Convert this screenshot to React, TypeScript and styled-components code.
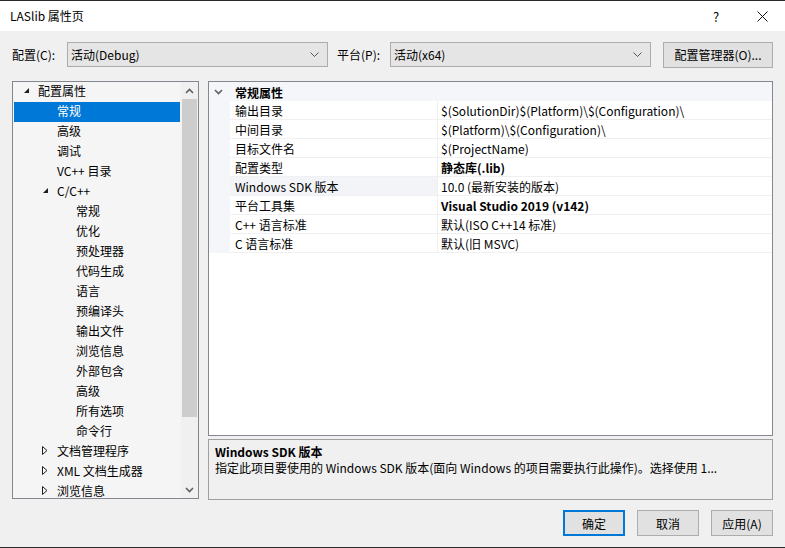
import React from "react";
import styled, { createGlobalStyle } from "styled-components";

const GlobalStyle = createGlobalStyle`
  html, body {
    margin: 0;
    padding: 0;
    background: #f0f0f0;
  }
  * {
    box-sizing: border-box;
  }
`;

const FONT = `"Noto Sans CJK SC", "Noto Sans", sans-serif`;

const Window = styled.div`
  width: 785px;
  height: 548px;
  background: #f0f0f0;
  border-top: 1px solid #2b2b2b;
  border-bottom: 1px solid #2b2b2b;
  font-family: ${FONT};
  font-size: 12px;
  color: #000;
  display: flex;
  flex-direction: column;
  overflow: hidden;
`;

const TitleBar = styled.div`
  height: 30px;
  background: #fff;
  display: flex;
  align-items: center;
  padding-left: 10px;
`;

const Title = styled.div`
  flex: 1;
  line-height: 16px;
`;

const CaptionButton = styled.div`
  width: 46px;
  height: 30px;
  display: flex;
  align-items: center;
  justify-content: center;
  font-size: 13px;
`;

const Toolbar = styled.div`
  display: flex;
  align-items: center;
  padding: 11px 12px 0;
  height: 36px;
`;

const Label = styled.div<{ $w: number; $pl?: number }>`
  width: ${(p) => p.$w}px;
  padding-left: ${(p) => p.$pl ?? 0}px;
  line-height: 25px;
`;

const Combo = styled.div`
  width: 261px;
  height: 25px;
  background: #e5e5e5;
  border: 1px solid #acacac;
  display: flex;
  align-items: center;
  padding: 0 8px 0 3px;
`;

const ComboText = styled.div`
  flex: 1;
`;

const Spacer = styled.div`
  width: 12px;
`;

const Button = styled.div<{ $w: number; $default?: boolean }>`
  width: ${(p) => p.$w}px;
  height: 26px;
  background: #e1e1e1;
  border: ${(p) => (p.$default ? "2px solid #0078d7" : "1px solid #adadad")};
  display: flex;
  align-items: center;
  justify-content: center;
`;

const Main = styled.div`
  display: flex;
  gap: 9px;
  padding: 14px 12px 0;
`;

const Tree = styled.div`
  width: 187px;
  height: 418px;
  border: 1px solid #828790;
  background: #f5f5f5;
  display: flex;
  overflow: hidden;
`;

const TreeList = styled.div`
  flex: 1;
  padding: 0 1px;
  overflow: hidden;
`;

const TreeRow = styled.div<{ $level: number; $selected?: boolean }>`
  height: 20px;
  display: flex;
  align-items: center;
  padding-left: ${(p) => 9 + p.$level * 19}px;
  padding-bottom: 3px;
  background: ${(p) => (p.$selected ? "#0078d7" : "transparent")};
  color: ${(p) => (p.$selected ? "#fff" : "#000")};
  white-space: nowrap;
`;

const Expander = styled.div<{ $w?: number; $pl?: number }>`
  width: ${(p) => p.$w ?? 15}px;
  padding-left: ${(p) => p.$pl ?? 0}px;
  height: 17px;
  display: flex;
  align-items: center;
`;

const ScrollBar = styled.div`
  width: 17px;
  background: #f0f0f0;
  display: flex;
  flex-direction: column;
`;

const ScrollArrow = styled.div`
  height: 17px;
  display: flex;
  align-items: center;
  justify-content: center;
`;

const ScrollTrack = styled.div`
  flex: 1;
  display: flex;
  flex-direction: column;
  padding: 0 1px;
`;

const ScrollThumb = styled.div`
  height: 318px;
  background: #cdcdcd;
`;

const RightCol = styled.div`
  width: 565px;
  display: flex;
  flex-direction: column;
  gap: 3px;
`;

const Grid = styled.div`
  height: 355px;
  border: 1px solid #828790;
  background: #fff;
  display: grid;
  grid-template-columns: 21px 207px 1fr;
  grid-auto-rows: 19px;
  align-content: start;
`;

const GroupHeader = styled.div`
  grid-column: 1 / -1;
  height: 20px;
  background: #f4f6fa;
  display: flex;
  align-items: center;
  font-weight: bold;
`;

const Gutter = styled.div`
  background: #f4f6fa;
`;

const Cell = styled.div<{ $bold?: boolean; $tint?: boolean; $value?: boolean }>`
  border-bottom: 1px solid #f0f0f0;
  border-left: ${(p) => (p.$value ? "1px solid #f0f0f0" : "none")};
  background: ${(p) => (p.$tint ? "#f2f4f8" : "#fff")};
  padding-left: ${(p) => (p.$value ? 3 : 5)}px;
  font-weight: ${(p) => (p.$bold ? "bold" : "normal")};
  line-height: 20px;
  white-space: nowrap;
  overflow: hidden;
`;

const Desc = styled.div`
  height: 61px;
  border: 1px solid #a0a0a0;
  background: #f0f0f0;
  padding: 4px 6px 0;
  line-height: 16px;
`;

const DescTitle = styled.div`
  font-weight: bold;
`;

const Footer = styled.div`
  display: flex;
  justify-content: flex-end;
  gap: 12px;
  padding: 10px 12px 0;
`;

const Chevron = ({ up, color = "#606060" }: { up?: boolean; color?: string }) => (
  <svg width="9" height="6" viewBox="0 0 9 6">
    <path
      d={up ? "M1 5 L4.5 1.5 L8 5" : "M1 1 L4.5 4.5 L8 1"}
      fill="none"
      stroke={color}
      strokeWidth="1.6"
    />
  </svg>
);

const ThinChevron = () => (
  <svg width="9" height="5" viewBox="0 0 9 5">
    <path d="M0.5 0.5 L4.5 4.5 L8.5 0.5" fill="none" stroke="#555" strokeWidth="1" />
  </svg>
);

const Expanded = () => (
  <svg width="7" height="7" viewBox="0 0 7 7">
    <path d="M6 1 L6 6 L1 6 Z" fill="#1e1e1e" />
  </svg>
);

const Collapsed = () => (
  <svg width="6" height="9" viewBox="0 0 6 9">
    <path d="M0.5 0.5 L5 4.5 L0.5 8.5 Z" fill="none" stroke="#1e1e1e" strokeWidth="1" />
  </svg>
);

type Node = { text: string; level: number; exp?: "open" | "closed"; selected?: boolean };

const tree: Node[] = [
  { text: "配置属性", level: 0, exp: "open" },
  { text: "常规", level: 1, selected: true },
  { text: "高级", level: 1 },
  { text: "调试", level: 1 },
  { text: "VC++ 目录", level: 1 },
  { text: "C/C++", level: 1, exp: "open" },
  ...["常规", "优化", "预处理器", "代码生成", "语言", "预编译头", "输出文件", "浏览信息", "外部包含", "高级", "所有选项", "命令行"].map(
    (t) => ({ text: t, level: 2 })
  ),
  { text: "文档管理程序", level: 1, exp: "closed" },
  { text: "XML 文档生成器", level: 1, exp: "closed" },
  { text: "浏览信息", level: 1, exp: "closed" },
];

type Prop = { name: string; value: string; bold?: boolean; tint?: boolean };

const props: Prop[] = [
  { name: "输出目录", value: "$(SolutionDir)$(Platform)\\$(Configuration)\\" },
  { name: "中间目录", value: "$(Platform)\\$(Configuration)\\" },
  { name: "目标文件名", value: "$(ProjectName)" },
  { name: "配置类型", value: "静态库(.lib)", bold: true },
  { name: "Windows SDK 版本", value: "10.0 (最新安装的版本)", tint: true },
  { name: "平台工具集", value: "Visual Studio 2019 (v142)", bold: true },
  { name: "C++ 语言标准", value: "默认(ISO C++14 标准)" },
  { name: "C 语言标准", value: "默认(旧 MSVC)" },
];

export default function App() {
  return (
    <>
      <GlobalStyle />
      <Window>
        <TitleBar>
          <Title>LASlib 属性页</Title>
          <CaptionButton>?</CaptionButton>
          <CaptionButton>
            <svg width="11" height="11" viewBox="0 0 11 11">
              <path d="M0.5 0.5 L10.5 10.5 M10.5 0.5 L0.5 10.5" stroke="#111" strokeWidth="1" />
            </svg>
          </CaptionButton>
        </TitleBar>

        <Toolbar>
          <Label $w={55}>配置(C):</Label>
          <Combo>
            <ComboText>活动(Debug)</ComboText>
            <ThinChevron />
          </Combo>
          <Label $w={62} $pl={9}>平台(P):</Label>
          <Combo>
            <ComboText>活动(x64)</ComboText>
            <ThinChevron />
          </Combo>
          <Spacer />
          <Button $w={110}>配置管理器(O)...</Button>
        </Toolbar>

        <Main>
          <Tree>
            <TreeList>
              {tree.map((n, i) => (
                <TreeRow key={i} $level={n.level} $selected={n.selected}>
                  <Expander>
                    {n.exp === "open" && <Expanded />}
                    {n.exp === "closed" && <Collapsed />}
                  </Expander>
                  {n.text}
                </TreeRow>
              ))}
            </TreeList>
            <ScrollBar>
              <ScrollArrow>
                <Chevron up />
              </ScrollArrow>
              <ScrollTrack>
                <ScrollThumb />
              </ScrollTrack>
              <ScrollArrow>
                <Chevron />
              </ScrollArrow>
            </ScrollBar>
          </Tree>

          <RightCol>
            <Grid>
              <GroupHeader>
                <Expander $w={26} $pl={5}>
                  <Chevron />
                </Expander>
                常规属性
              </GroupHeader>
              {props.map((p) => (
                <React.Fragment key={p.name}>
                  <Gutter />
                  <Cell $tint={p.tint}>{p.name}</Cell>
                  <Cell $value $bold={p.bold}>
                    {p.value}
                  </Cell>
                </React.Fragment>
              ))}
            </Grid>
            <Desc>
              <DescTitle>Windows SDK 版本</DescTitle>
              <div>指定此项目要使用的 Windows SDK 版本(面向 Windows 的项目需要执行此操作)。选择使用 1...</div>
            </Desc>
          </RightCol>
        </Main>

        <Footer>
          <Button $w={62} $default>
            确定
          </Button>
          <Button $w={62}>取消</Button>
          <Button $w={62}>应用(A)</Button>
        </Footer>
      </Window>
    </>
  );
}
